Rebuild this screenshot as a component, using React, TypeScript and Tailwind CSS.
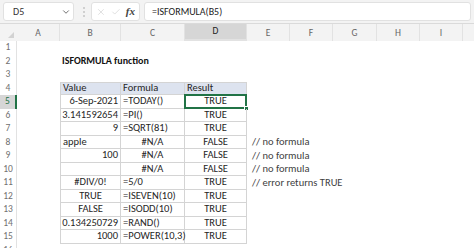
import { X, Check, ChevronDown } from 'lucide-react';

type Align = 'l' | 'c' | 'r';
interface Row {
  b?: string;
  ba?: Align;
  c?: string;
  ca?: Align;
  d?: string;
  e?: string;
}

const COLS = [17, 43, 61, 64, 62, 43, 43, 44, 43, 43, 11];
const LETTERS = ['', 'A', 'B', 'C', 'D', 'E', 'F', 'G', 'H', 'I', ''];

const rows: Row[] = [
  {},
  {},
  {},
  { b: 'Value', ba: 'l', c: 'Formula', ca: 'l', d: 'Result' },
  { b: '6-Sep-2021', ba: 'r', c: '=TODAY()', ca: 'l', d: 'TRUE' },
  { b: '3.141592654', ba: 'r', c: '=PI()', ca: 'l', d: 'TRUE' },
  { b: '9', ba: 'r', c: '=SQRT(81)', ca: 'l', d: 'TRUE' },
  { b: 'apple', ba: 'l', c: '#N/A', ca: 'c', d: 'FALSE', e: '// no formula' },
  { b: '100', ba: 'r', c: '#N/A', ca: 'c', d: 'FALSE', e: '// no formula' },
  { b: '', ba: 'l', c: '#N/A', ca: 'c', d: 'FALSE', e: '// no formula' },
  { b: '#DIV/0!', ba: 'c', c: '=5/0', ca: 'l', d: 'TRUE', e: '// error returns TRUE' },
  { b: 'TRUE', ba: 'c', c: '=ISEVEN(10)', ca: 'l', d: 'TRUE' },
  { b: 'FALSE', ba: 'c', c: '=ISODD(10)', ca: 'l', d: 'TRUE' },
  { b: '0.134250729', ba: 'r', c: '=RAND()', ca: 'l', d: 'TRUE' },
  { b: '1000', ba: 'r', c: '=POWER(10,3)', ca: 'l', d: 'TRUE' },
  {},
];

const gridCols = 'grid grid-cols-[17px_43px_61px_64px_62px_43px_43px_44px_43px_43px_11px]';

function alignCls(a?: Align) {
  if (a === 'r') return 'justify-end pr-[2px]';
  if (a === 'c') return 'justify-center';
  return 'justify-start pl-[2px]';
}

function TableCell({
  text,
  align,
  first,
  top,
  head,
  selected,
}: {
  text?: string;
  align?: Align;
  first?: boolean;
  top?: boolean;
  head?: boolean;
  selected?: boolean;
}) {
  return (
    <div
      className={`relative flex items-center h-full border-r border-b border-[#d4d4d4] whitespace-nowrap ${
        first ? 'border-l' : ''
      } ${top ? 'border-t' : ''} ${head ? 'bg-[#dde3ef]' : ''} ${alignCls(align)}`}
    >
      {text}
      {selected && (
        <>
          <div className="absolute -left-px -top-px -right-px -bottom-px border-2 border-[#217346]" />
          <div className="absolute -right-[3px] -bottom-[3px] w-[5px] h-[5px] bg-[#217346] border border-white" />
        </>
      )}
    </div>
  );
}

export default function App() {
  return (
    <div className="w-[474px] h-[248px] overflow-hidden bg-white text-[#262626] font-['Carlito','Roboto',sans-serif] text-[10.5px] leading-none select-none">
      {/* formula bar */}
      <div className="flex items-center h-[24px] px-[3px] gap-[4px] bg-[#f3f3f3] border-b border-[#dadada]">
        <div className="flex items-center justify-between w-[71px] h-[19px] pl-[9px] pr-[2px] bg-white border border-[#e1e1e1] rounded-[3px] text-[10px] text-[#333]">
          <span>D5</span>
          <ChevronDown size={10} strokeWidth={2} className="text-[#555]" />
        </div>
        <div className="flex flex-col gap-[2px] pl-[5px] pr-[2px]">
          <span className="w-[2px] h-[2px] rounded-full bg-[#c4c4c4]" />
          <span className="w-[2px] h-[2px] rounded-full bg-[#c4c4c4]" />
          <span className="w-[2px] h-[2px] rounded-full bg-[#c4c4c4]" />
        </div>
        <div className="flex items-center gap-[5px] w-[49px] h-[19px] px-[4px] bg-white border border-[#e1e1e1] rounded-[3px]">
          <X size={12} strokeWidth={1.25} className="text-[#c2c2c2]" />
          <Check size={12} strokeWidth={1.25} className="text-[#c2c2c2]" />
          <span className="font-['Liberation_Serif',serif] italic font-bold text-[11px] text-[#444]">fx</span>
        </div>
        <div className="flex items-center flex-1 h-[19px] pl-[7px] bg-white border border-[#e1e1e1] rounded-[3px] text-[10px] text-[#222]">
          =ISFORMULA(B5)
        </div>
      </div>

      {/* column headers */}
      <div className={`${gridCols} h-[17px] bg-[#f3f3f3] text-[9.5px] text-[#666]`}>
        {COLS.map((_, i) => (
          <div
            key={i}
            className={`relative flex items-end justify-center pb-[3px] ${
              i === 4 ? 'bg-[#d6d6d6] border-b-2 border-[#217346] text-[#222]' : ''
            } ${i > 0 && i < 10 ? 'border-r border-[#e2e2e2]' : ''}`}
          >
            {i === 0 ? (
              <div className="absolute right-[3px] bottom-[3px] w-0 h-0 border-l-[6px] border-l-transparent border-b-[6px] border-b-[#d2d2d2]" />
            ) : (
              LETTERS[i]
            )}
          </div>
        ))}
      </div>

      {/* rows */}
      {rows.map((r, idx) => {
        const n = idx + 1;
        const inTable = n >= 4 && n <= 15;
        const isHead = n === 4;
        return (
          <div key={n} className={`${gridCols} h-[13.5px]`}>
            <div
              className={`flex items-center justify-center text-[9.5px] border-r ${
                n === 5
                  ? 'bg-[#d6d6d6] text-[#217346] border-r-2 border-[#217346]'
                  : 'text-[#707070] border-[#e2e2e2]'
              }`}
            >
              {n}
            </div>
            <div />
            {n === 2 ? (
              <div className="col-span-3 flex items-center pl-[2px] font-bold text-[10px] whitespace-nowrap text-[#111]">
                ISFORMULA function
              </div>
            ) : inTable ? (
              <>
                <TableCell text={r.b} align={r.ba} first top={isHead} head={isHead} />
                <TableCell text={r.c} align={r.ca} top={isHead} head={isHead} />
                <TableCell text={r.d} align={isHead ? 'l' : 'c'} top={isHead} head={isHead} selected={n === 5} />
              </>
            ) : (
              <>
                <div />
                <div />
                <div />
              </>
            )}
            <div className="col-span-5 flex items-center pl-[5px] whitespace-nowrap text-[#404040]">{r.e}</div>
            <div />
          </div>
        );
      })}
    </div>
  );
}
